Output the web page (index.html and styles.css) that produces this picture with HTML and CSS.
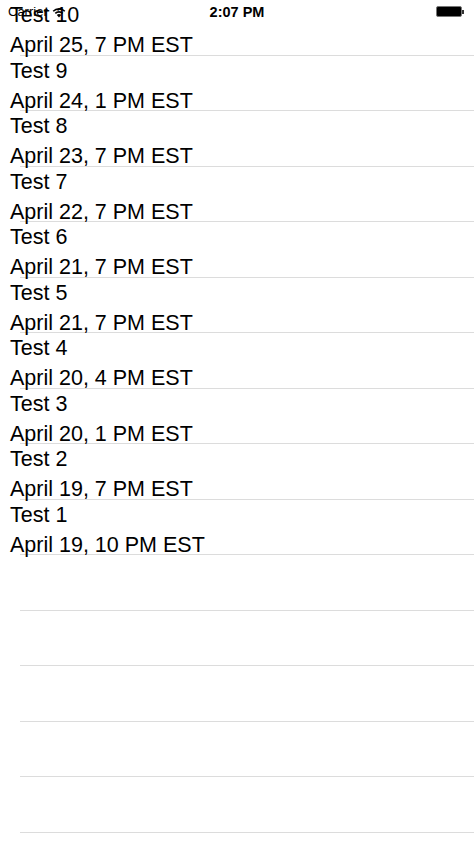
FILE: index.html
```html
<!DOCTYPE html>
<html>
<head>
<meta charset="utf-8">
<link rel="stylesheet" href="styles.css">
</head>
<body>
<div class="statusbar">
  <div class="carrier">Carrier
    <svg class="wifi" width="14" height="11" viewBox="0 0 14 11">
      <path d="M7 10.5 L9.2 8 A3.2 3.2 0 0 0 4.8 8 Z" fill="#000"/>
      <path d="M3.3 6.4 A5.3 5.3 0 0 1 10.7 6.4" stroke="#000" stroke-width="1.6" fill="none"/>
      <path d="M1.2 4.2 A8.3 8.3 0 0 1 12.8 4.2" stroke="#000" stroke-width="1.6" fill="none"/>
    </svg>
  </div>
  <div class="time">2:07 PM</div>
  <div class="battery"><div class="batt-body"></div><div class="batt-nub"></div></div>
</div>
<div class="table">
  <div class="row"><div class="title">Test 10</div><div class="date">April 25, 7 PM EST</div></div>
  <div class="row"><div class="title">Test 9</div><div class="date">April 24, 1 PM EST</div></div>
  <div class="row"><div class="title">Test 8</div><div class="date">April 23, 7 PM EST</div></div>
  <div class="row"><div class="title">Test 7</div><div class="date">April 22, 7 PM EST</div></div>
  <div class="row"><div class="title">Test 6</div><div class="date">April 21, 7 PM EST</div></div>
  <div class="row"><div class="title">Test 5</div><div class="date">April 21, 7 PM EST</div></div>
  <div class="row"><div class="title">Test 4</div><div class="date">April 20, 4 PM EST</div></div>
  <div class="row"><div class="title">Test 3</div><div class="date">April 20, 1 PM EST</div></div>
  <div class="row"><div class="title">Test 2</div><div class="date">April 19, 7 PM EST</div></div>
  <div class="row"><div class="title">Test 1</div><div class="date">April 19, 10 PM EST</div></div>
  <div class="row"></div>
  <div class="row"></div>
  <div class="row"></div>
  <div class="row"></div>
  <div class="row"></div>
</div>
</body>
</html>
```
FILE: styles.css
```css
html, body {
  margin: 0;
  padding: 0;
  background: #fff;
  width: 474px;
  height: 843px;
  overflow: hidden;
  font-family: "Liberation Sans", Arial, sans-serif;
  color: #000;
}
.statusbar {
  position: absolute;
  top: 0;
  left: 0;
  right: 0;
  height: 22px;
  z-index: 2;
}
.carrier {
  position: absolute;
  left: 8px;
  top: 4px;
  font-size: 13px;
  line-height: 16px;
  display: flex;
  align-items: center;
  gap: 4px;
}
.time {
  position: absolute;
  left: 0;
  right: 0;
  top: 4px;
  text-align: center;
  font-weight: bold;
  font-size: 14.5px;
  line-height: 16px;
}
.battery {
  position: absolute;
  left: 436px;
  top: 6px;
  display: flex;
  align-items: center;
}
.batt-body {
  width: 24px;
  height: 9px;
  background: #000;
  border: 1px solid #777;
  border-radius: 2px;
}
.batt-nub {
  width: 2px;
  height: 4px;
  background: #333;
}
.table {
  display: flex;
  flex-direction: column;
}
.row {
  height: 55.5px;
  flex: none;
  box-sizing: border-box;
  padding-left: 10px;
  position: relative;
  font-size: 21.5px;
  line-height: 30px;
}
.row::after {
  content: "";
  position: absolute;
  left: 20px;
  right: 0;
  bottom: 0;
  height: 1px;
  background: #dcdcdc;
}
.title, .date {
  white-space: nowrap;
  position: relative;
  z-index: 1;
}
```
